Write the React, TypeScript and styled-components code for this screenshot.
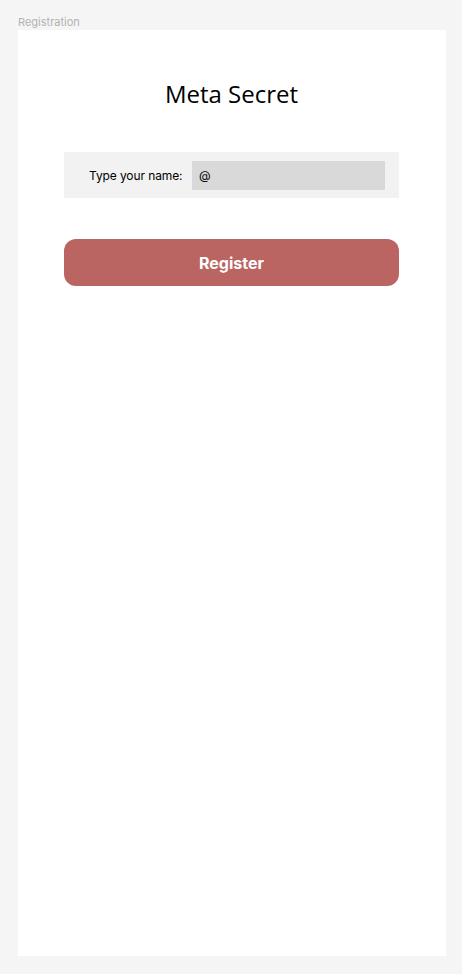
import styled, { createGlobalStyle } from "styled-components";

const GlobalStyle = createGlobalStyle`
  html, body {
    margin: 0;
    padding: 0;
    background: #f5f5f5;
  }
  * {
    box-sizing: border-box;
  }
`;

const Page = styled.div`
  padding: 14px 16px 18px 18px;
  min-height: 974px;
  background: #f5f5f5;
`;

const FrameLabel = styled.div`
  font-family: Inter, "Liberation Sans", sans-serif;
  font-size: 11px;
  line-height: 16px;
  color: #b3b3b3;
`;

const Frame = styled.main`
  width: 428px;
  height: 926px;
  background: #fff;
  display: flex;
  flex-direction: column;
  padding: 47px 47px 0 46px;
`;

const Title = styled.h1`
  margin: 0;
  text-align: center;
  font-family: "Open Sans", "Noto Sans", sans-serif;
  font-weight: 400;
  font-size: 24px;
  line-height: 33px;
  color: #000;
`;

const Form = styled.form`
  margin-top: 42px;
  display: flex;
  flex-direction: column;
  gap: 41px;
`;

const NameRow = styled.label`
  height: 46px;
  background: #f2f2f2;
  display: flex;
  align-items: center;
  justify-content: space-between;
  padding: 0 14px 0 25px;
  font-family: Inter, "Liberation Sans", sans-serif;
  font-size: 12px;
  letter-spacing: -0.1px;
  color: #000;
  white-space: nowrap;
`;

const NameInput = styled.input`
  width: 193px;
  flex-shrink: 0;
  height: 29px;
  border: none;
  outline: none;
  background: #d9d9d9;
  padding: 0 7px;
  font-family: Inter, "Liberation Sans", sans-serif;
  font-size: 12px;
  color: #000;
`;

const RegisterButton = styled.button`
  height: 47px;
  border: none;
  border-radius: 12px;
  background: #bb6563;
  color: #fff;
  font-family: Inter, "Liberation Sans", sans-serif;
  font-weight: 700;
  font-size: 16px;
  cursor: pointer;
`;

export default function App() {
  return (
    <>
      <GlobalStyle />
      <Page>
        <FrameLabel>Registration</FrameLabel>
        <Frame>
          <Title>Meta Secret</Title>
          <Form onSubmit={(e) => e.preventDefault()}>
            <NameRow>
              Type your name:
              <NameInput defaultValue="@" />
            </NameRow>
            <RegisterButton type="submit">Register</RegisterButton>
          </Form>
        </Frame>
      </Page>
    </>
  );
}
